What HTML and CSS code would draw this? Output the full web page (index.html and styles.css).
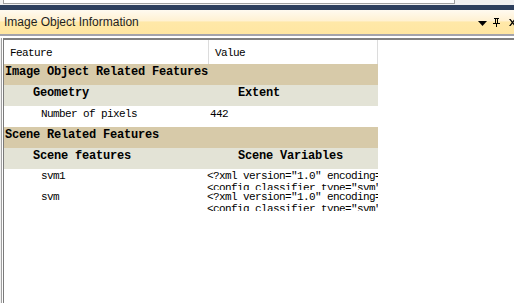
FILE: index.html
```html
<!DOCTYPE html>
<html>
<head>
<meta charset="utf-8">
<link rel="stylesheet" href="styles.css">
</head>
<body>
<div class="top-strip"><div class="top-box"></div></div>
<div class="navy"></div>
<div class="title">
  <span class="title-text">Image Object Information</span>
  <div class="title-icons">
    <svg class="ic tri" width="9" height="5" viewBox="0 0 9 5"><path d="M0 0h9L4.5 5z" fill="#000"/></svg>
    <svg class="ic pin" width="7" height="9" viewBox="0 0 7 9"><path d="M1 0h5v1h-1v4h2v1h-3v3h-1v-3h-3v-1h2v-4h-1z" fill="#000"/><rect x="2" y="1" width="1" height="4" fill="#000"/><rect x="3" y="1" width="1" height="4" fill="#ffe6a2"/></svg>
    <svg class="ic cls" width="7" height="7" viewBox="0 0 7 7"><path d="M0 0h1.6L3.5 2.4 5.4 0H7L4.3 3.5 7 7H5.4L3.5 4.6 1.6 7H0l2.7-3.5z" fill="#000"/></svg>
  </div>
</div>
<div class="sep"></div>
<div class="panel">
  <div class="grid">
    <div class="row head">
      <div class="cell c1">Feature</div>
      <div class="cell c2">Value</div>
    </div>
    <div class="row section"><div class="cell span">Image Object Related Features</div></div>
    <div class="row group">
      <div class="cell c1 ind">Geometry</div>
      <div class="cell c2 ind2">Extent</div>
    </div>
    <div class="row item">
      <div class="cell c1 ind3">Number of pixels</div>
      <div class="cell c2 v">442</div>
    </div>
    <div class="row section"><div class="cell span">Scene Related Features</div></div>
    <div class="row group">
      <div class="cell c1 ind">Scene features</div>
      <div class="cell c2 ind2">Scene Variables</div>
    </div>
    <div class="row item multi">
      <div class="cell c1 ind3">svm1</div>
      <div class="cell c2 vx">&lt;?xml version="1.0" encoding="UTF-8"?&gt;<br>&lt;config classifier type="svm"&gt;</div>
    </div>
    <div class="row item multi">
      <div class="cell c1 ind3">svm</div>
      <div class="cell c2 vx">&lt;?xml version="1.0" encoding="UTF-8"?&gt;<br>&lt;config classifier type="svm"&gt;</div>
    </div>
  </div>
</div>
</body>
</html>
```

FILE: styles.css
```css
html, body {
  margin: 0;
  padding: 0;
  background: #ffffff;
}
body {
  width: 514px;
  height: 303px;
  overflow: hidden;
}
.top-strip {
  height: 5px;
  background: #f0f0f0;
}
.top-box {
  margin-left: 3px;
  width: 450px;
  height: 3px;
  background: #ffffff;
  border: 1px solid #a0a0a0;
  border-top: none;
}
.navy {
  height: 5px;
  background: #2d3f5d;
}
.title {
  height: 24px;
  background: linear-gradient(#fffaf0 0, #fff1d2 45%, #ffe8a8 50%, #ffe6a2 100%);
  display: flex;
  align-items: center;
  justify-content: space-between;
  font-family: "Liberation Sans", Arial, sans-serif;
  font-size: 12px;
  color: #1e1e1e;
}
.title-text {
  padding-left: 4px;
}
.title-icons {
  display: flex;
  align-items: flex-start;
  height: 24px;
  margin-right: -2px;
}
.ic { display: block; }
.tri { margin-top: 11px; }
.pin { margin-top: 8px; margin-left: 6px; }
.cls { margin-top: 9px; margin-left: 9px; }
.sep {
  height: 2px;
  background: #a4a4ac;
  border-bottom: 2px solid #ffffff;
}
.panel {
  display: flex;
  height: 265px;
  border-top: 2px solid #808080;
  margin-left: 3px;
  border-left: 1px solid #7a7a7a;
  box-shadow: -1px 0 0 #ffffff, -2px 0 0 #a0a0a0, -3px 0 0 #f0f0f0;
}
.grid {
  width: 374px;
  display: flex;
  flex-direction: column;
  font-family: "Liberation Mono", "DejaVu Sans Mono", monospace;
  font-size: 11px;
  letter-spacing: -0.6px;
  color: #000;
}
.row {
  display: flex;
  height: 21px;
  align-items: flex-start;
}
.row.head {
  height: 24px;
}
.cell {
  overflow: hidden;
  white-space: nowrap;
  box-sizing: border-box;
  height: 100%;
  line-height: 12px;
  padding-top: 2px;
}
.c1 { width: 205px; }
.c2 { width: 169px; }
.head .cell {
  padding-left: 6px;
  padding-top: 7px;
  border-right: 1px solid #dcdcdc;
}
.section {
  background: #d7caa9;
  font-weight: bold;
  font-size: 12px;
  letter-spacing: -0.2px;
}
.span { padding-left: 1px; width: 374px; }
.group {
  background: #e3e3d6;
  font-weight: bold;
  font-size: 12px;
  letter-spacing: -0.2px;
}
.ind { padding-left: 29px; }
.ind2 { padding-left: 29px; }
.ind3 { padding-left: 37px; }
.v { padding-left: 1px; }
.multi .cell {
  padding-top: 1px;
}
.multi .c1 { width: 203px; }
.multi .c2 { width: 171px; }
```
